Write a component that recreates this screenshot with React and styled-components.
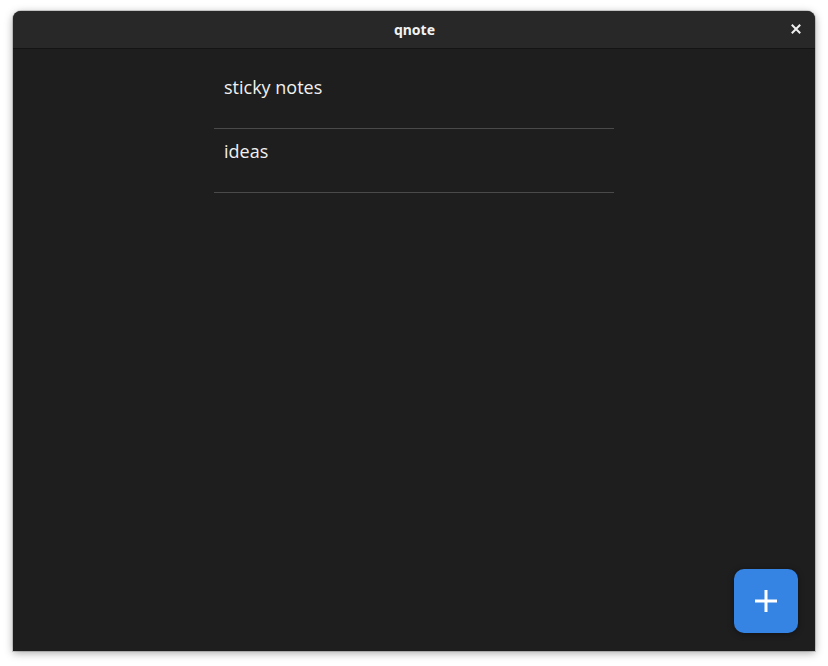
import React from "react";
import styled, { createGlobalStyle } from "styled-components";

const GlobalStyle = createGlobalStyle`
  html, body {
    margin: 0;
    padding: 0;
    background: #ffffff;
  }
  body {
    font-family: "Noto Sans", "Open Sans", sans-serif;
  }
`;

const notes = [{ id: 1, title: "sticky notes" }, { id: 2, title: "ideas" }];

let App = () => {
  return (
    <div>
      <GlobalStyle />
      <Desktop>
        <Window>
          <HeaderBar>
            <Title>qnote</Title>
            <CloseButton aria-label="close">
              <svg width="10" height="10" viewBox="0 0 10 10">
                <path d="M1.5 1.5 L8.5 8.5 M8.5 1.5 L1.5 8.5" stroke="#f0f0f0" strokeWidth="2" strokeLinecap="square" />
              </svg>
            </CloseButton>
          </HeaderBar>
          <Content>
            <NoteList>
              {notes.map((note) => (
                <NoteRow key={note.id}>{note.title}</NoteRow>
              ))}
            </NoteList>
            <Fab aria-label="new note">
              <svg width="26" height="26" viewBox="0 0 26 26">
                <path d="M13 2 V24 M2 13 H24" stroke="#ffffff" strokeWidth="3" />
              </svg>
            </Fab>
          </Content>
        </Window>
      </Desktop>
    </div>
  );
};

const Desktop = styled.div`
  width: 828px;
  height: 666px;
  padding: 11px 13px 15px 13px;
  box-sizing: border-box;
`;

const Window = styled.div`
  width: 802px;
  height: 640px;
  display: flex;
  flex-direction: column;
  background: #1e1e1e;
  border-radius: 8px 8px 0 0;
  overflow: hidden;
  box-shadow: 0 2px 8px rgba(0, 0, 0, 0.35), 0 0 0 1px rgba(0, 0, 0, 0.15);
`;

const HeaderBar = styled.div`
  position: relative;
  height: 37px;
  flex-shrink: 0;
  display: flex;
  align-items: center;
  justify-content: center;
  background: #282828;
  border-bottom: 1px solid #141414;
`;

const Title = styled.div`
  color: #f2f2f2;
  font-family: "Noto Sans", sans-serif;
  font-weight: 700;
  font-size: 14px;
  padding-left: 1px;
`;

const CloseButton = styled.button`
  position: absolute;
  right: 14px;
  top: 13px;
  width: 10px;
  height: 10px;
  padding: 0;
  border: none;
  background: none;
  display: flex;
  align-items: center;
  justify-content: center;
`;

const Content = styled.div`
  position: relative;
  flex: 1;
  display: flex;
  justify-content: center;
  padding-top: 16px;
`;

const NoteList = styled.div`
  width: 400px;
  display: flex;
  flex-direction: column;
`;

const NoteRow = styled.div`
  height: 64px;
  padding: 9px 10px 0 10px;
  box-sizing: border-box;
  color: #f0f0f0;
  font-family: "Open Sans", "Noto Sans", sans-serif;
  font-size: 18px;
  line-height: 26px;
  border-bottom: 1px solid #4a4a4a;
`;

const Fab = styled.button`
  position: absolute;
  right: 17px;
  bottom: 18px;
  width: 64px;
  height: 64px;
  border: none;
  border-radius: 10px;
  background: #3584e4;
  display: flex;
  align-items: center;
  justify-content: center;
  box-shadow: 0 1px 6px rgba(0, 0, 0, 0.4);
`;

export default App;
